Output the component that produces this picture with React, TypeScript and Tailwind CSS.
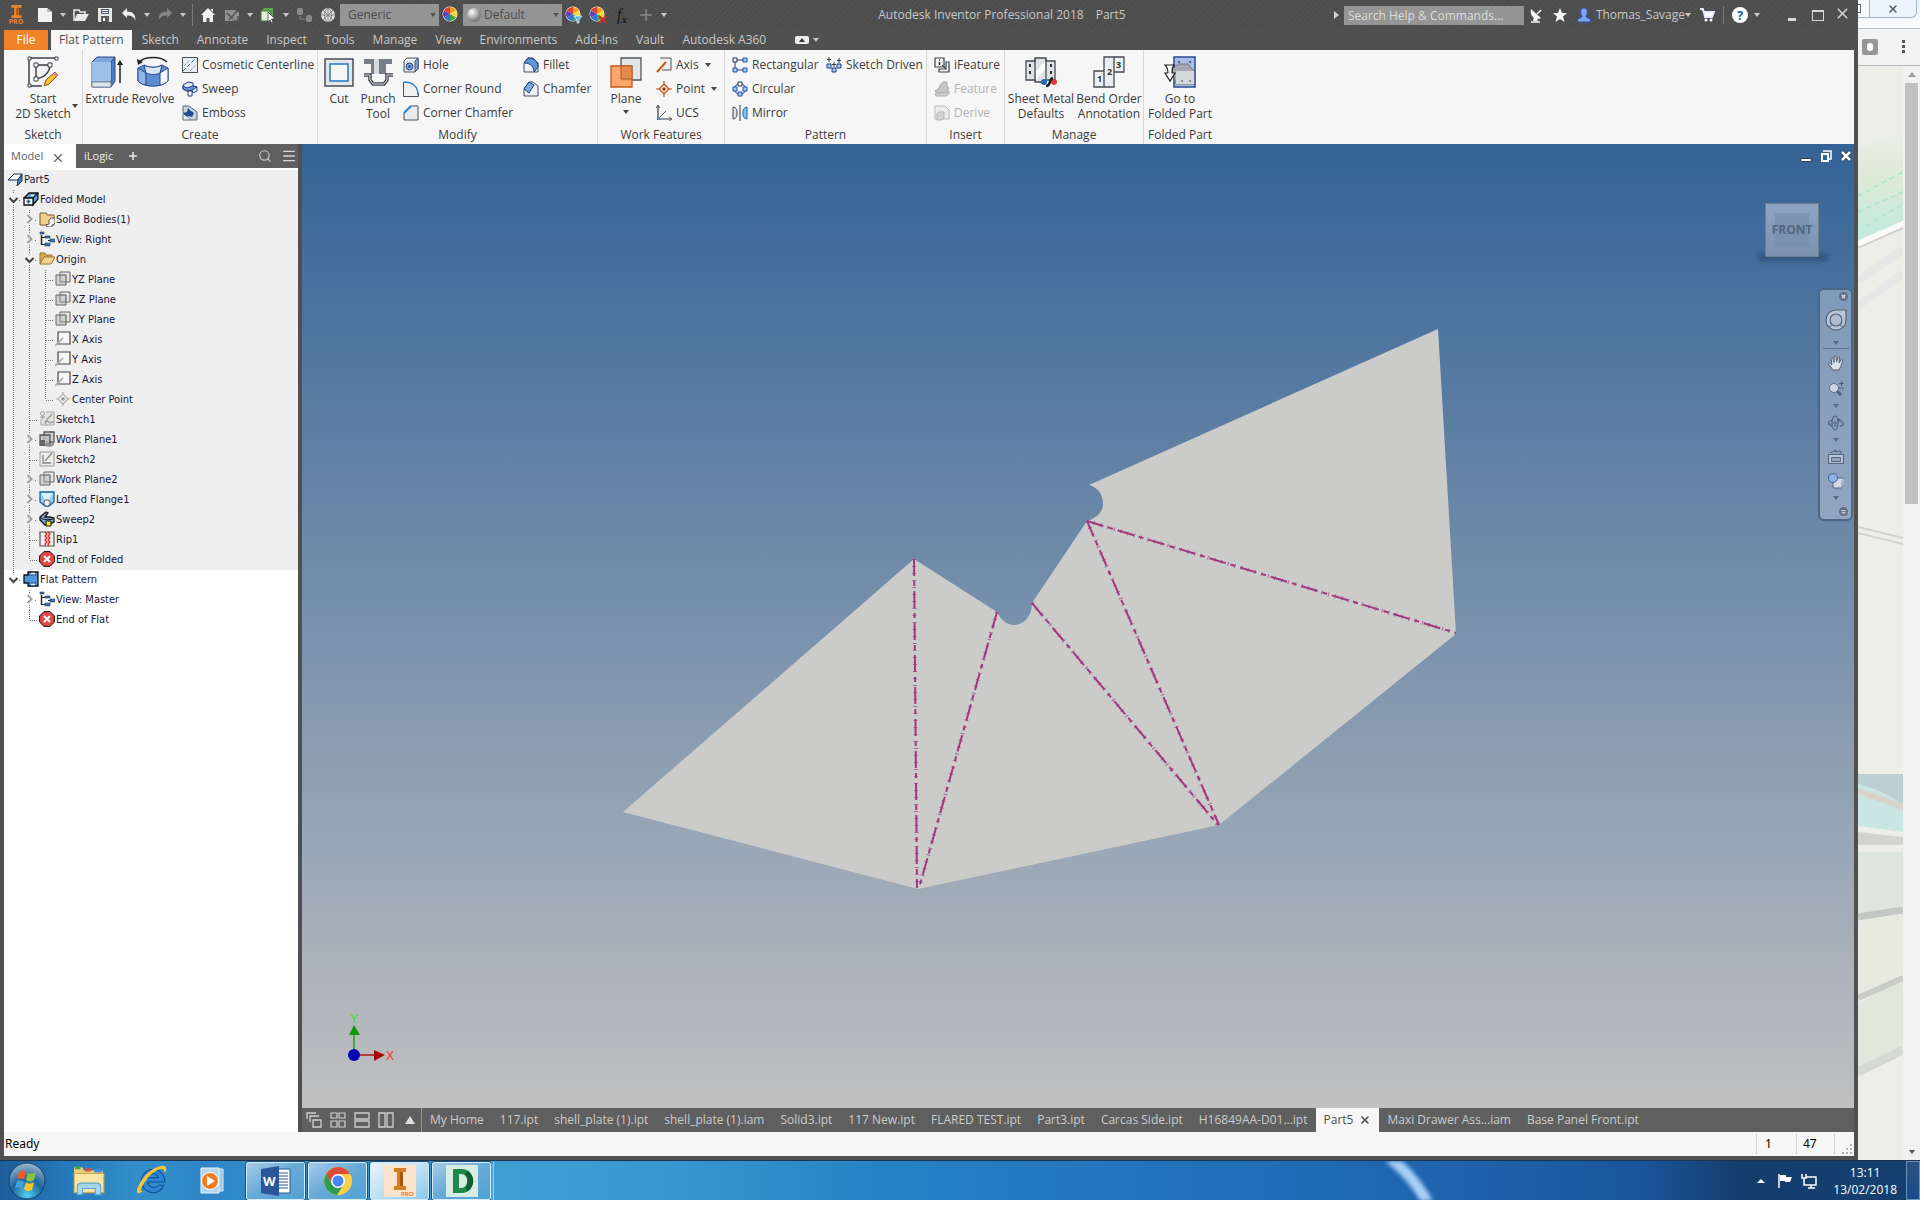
import type { ReactNode } from 'react';
import { Menu, Plus, Search, X } from 'lucide-react';

type IconProps = { children: ReactNode; size?: number; box?: number };

const Svg = ({ children, size = 16, box }: IconProps) => (
  <svg
    width={size}
    height={size}
    viewBox={`0 0 ${box ?? size} ${box ?? size}`}
    fill="none"
    className="shrink-0"
    aria-hidden="true"
  >
    {children}
  </svg>
);

const Caret = ({ className = 'text-[#c8c8c8]' }: { className?: string }) => (
  <svg width="6" height="4" viewBox="0 0 6 4" className={`shrink-0 ${className}`} aria-hidden="true">
    <path d="M0 0h6L3 4z" fill="currentColor" />
  </svg>
);

const ColorWheel = ({ badge }: { badge?: ReactNode }) => (
  <Svg size={18}>
    <circle cx="8" cy="8" r="7.500" fill="#fff" />
    <path d="M8 8V1a7 7 0 0 1 6 3.500z" fill="#f39a1f" />
    <path d="M8 8l6-3.500a7 7 0 0 1 0 7z" fill="#f7d93a" />
    <path d="M8 8l6 3.500A7 7 0 0 1 8 15z" fill="#43a83b" />
    <path d="M8 8v7a7 7 0 0 1-6-3.500z" fill="#2f74d0" />
    <path d="M8 8l-6 3.500a7 7 0 0 1 0-7z" fill="#5a3fb8" />
    <path d="M8 8L2 4.500A7 7 0 0 1 8 1z" fill="#e0402c" />
    {badge}
  </Svg>
);

const icons = {
  newFile: (
    <Svg>
      <path d="M1 1h9l5 4v10H1z" fill="#f2f2f2" />
      <path d="M10 1v4h5z" fill="#bdbdbd" />
    </Svg>
  ),
  open: (
    <Svg>
      <path d="M1 14V3h5l1 2h5v2" stroke="#e8e8e8" strokeWidth="1.500" />
      <path d="M1 14L4 7h12l-4 7z" fill="#e8e8e8" />
    </Svg>
  ),
  save: (
    <Svg>
      <path d="M1 1h14v14H2l-1-1z" fill="#e8e8e8" />
      <path d="M4 2h8v5H4z" fill="#4a5a70" />
      <path d="M5 3h6v1H5zM5 5h6v1H5z" fill="#fff" />
      <path d="M4 9h8v6H4z" fill="#5b5b5b" />
      <path d="M6 11h2v3H6z" fill="#fff" />
    </Svg>
  ),
  undo: (
    <Svg>
      <path d="M1 6l5-5v3.500c6 0 8.500 3 8.500 9-1.500-3.500-3.500-5-8.500-5V11z" fill="#efefef" />
    </Svg>
  ),
  redo: (
    <Svg>
      <path d="M15 6l-5-5v3.500c-6 0-8.500 3-8.500 9 1.500-3.500 3.500-5 8.500-5V11z" fill="#858585" />
    </Svg>
  ),
  home: (
    <Svg>
      <path d="M8 1l7 7h-2v7H9.500v-4h-3v4H3V8H1z" fill="#f2f2f2" />
      <path d="M11 2h2v3l-2-2z" fill="#f2f2f2" />
    </Svg>
  ),
  sketchTool: (
    <Svg>
      <path d="M1 3h10l4 3v8H1z" fill="#909090" />
      <path d="M5 13l8-9M3 6l6 6M9 14h5V9" stroke="#555" strokeWidth="1.500" />
    </Svg>
  ),
  select: (
    <Svg>
      <path d="M1 4l3-3h9v9l-2 3H1z" fill="#58a84a" />
      <path d="M1 4h9v10H1z" fill="#e4efe0" stroke="#3b7b30" />
      <path d="M8 5v10l2-2 1.500 3 1.500-1-1.500-3H15z" fill="#fff" stroke="#333" strokeWidth=".7" />
    </Svg>
  ),
  links: (
    <Svg>
      <rect x="1" y="1" width="6" height="7" rx="2" fill="#8a8a8a" />
      <rect x="10" y="8" width="6" height="7" rx="2" fill="#8a8a8a" />
      <path d="M4 9v3h5" stroke="#8a8a8a" />
    </Svg>
  ),
  material: (
    <Svg>
      <circle cx="8" cy="8" r="7" fill="#dedede" />
      <path d="M8 1v14M1 8h14M3 3l10 10M13 3L3 13" stroke="#777" strokeWidth=".8" />
      <ellipse cx="8" cy="8" rx="3.500" ry="7" stroke="#777" strokeWidth=".8" />
    </Svg>
  ),
  dish: (
    <Svg>
      <path d="M3 2l10 9c-4 3-12-1-10-9z" fill="#f5f5f5" />
      <path d="M9 7l4-4M3 15h9" stroke="#f5f5f5" strokeWidth="1.500" />
      <path d="M6 10l-1 4h5l-1-3z" fill="#f5f5f5" />
    </Svg>
  ),
  star: (
    <Svg>
      <path d="M8 1l2 5h5l-4 3.500 1.500 5.500L8 12l-4.500 3L5 9.500 1 6h5z" fill="#f5f5f5" />
    </Svg>
  ),
  user: (
    <Svg>
      <path
        d="M8 1c3 0 3.500 2 3.300 5-.1 2-1.300 3-1.300 4l4.500 2v3h-13v-3L6 10c0-1-1.200-2-1.300-4C4.500 3 5 1 8 1z"
        fill="#7da2f0"
        stroke="#2f4fa5"
      />
    </Svg>
  ),
  cart: (
    <Svg>
      <path d="M1 2h3l2 8h7l2-5H5" fill="#fff" stroke="#e8ecff" strokeWidth="1.800" />
      <circle cx="7" cy="13" r="1.500" fill="#fff" />
      <circle cx="12" cy="13" r="1.500" fill="#fff" />
    </Svg>
  ),
  startSketch: (
    <Svg size={32}>
      <path d="M2 31V2h29" stroke="#3c4048" strokeWidth="1.500" />
      <path d="M2 30h13" stroke="#3c4048" strokeWidth="1.500" />
      <path d="M9 9v14c8-1 14-7 14-14z" stroke="#3c4048" strokeWidth="1.500" fill="#f0f0f0" />
      <path d="M7 7h4v4H7zM21 7h4v4h-4zM7 21h4v4H7zM1 1h3v3H1zM28 1h3v3h-3zM1 28h3v3H1z" fill="#fff" stroke="#3c4048" />
      <path d="M17 30l2-6 9-8 3 3-9 9z" fill="#f7c42c" stroke="#8a4b18" />
      <path d="M26 18l2-2 3 3-2 2z" fill="#d88b8b" />
    </Svg>
  ),
  extrude: (
    <Svg size={32}>
      <path d="M1 6l5-5h18l-4 5v25H1z" fill="#7fa6da" stroke="#27498f" />
      <path d="M20 6l4-5v24l-4 6z" fill="#4f7cc4" stroke="#27498f" />
      <path d="M1 6h19v19H1z" fill="#9cc0ea" />
      <path d="M1 26h19v5H1z" fill="#dfe5ef" stroke="#7a8699" />
      <path d="M29 27V7" stroke="#222" strokeWidth="1.500" />
      <path d="M26 9l3-5 3 5z" fill="#222" />
    </Svg>
  ),
  revolve: (
    <Svg size={32}>
      <path d="M2 6C8 0 24 0 30 6" stroke="#222" strokeWidth="1.600" />
      <path d="M0 3l1 6 5-3z" fill="#222" />
      <path d="M1 12l6-3c5 3 13 3 18 0l6 3v13c-8 7-22 7-30 0z" fill="#5d8fd0" stroke="#27498f" />
      <path d="M7 9c5 3 13 3 18 0l-2 8c-4 2-10 2-14 0z" fill="#dbe4f2" stroke="#27498f" />
      <path d="M1 12l8 5v12c-3 0-6-2-8-4z" fill="#8fb5e6" stroke="#27498f" />
      <path d="M31 12l-8 5v12c3 0 6-2 8-4z" fill="#f3f6fb" stroke="#27498f" />
    </Svg>
  ),
  centerline: (
    <Svg>
      <path d="M.500.500h15v15H.500z" fill="#e9edf1" stroke="#48505c" />
      <path d="M1 14L14 1" stroke="#2c66b8" strokeDasharray="4 2" />
      <path d="M2 9l6-6M8 14l6-6" stroke="#9aa3ae" strokeDasharray="3 1" />
    </Svg>
  ),
  sweep: (
    <Svg>
      <path d="M1 4l5-3 5 1v3l4 1v4l-4 2-1-3-5 1-4-2z" fill="#dfe9f6" stroke="#1c3c80" />
      <path d="M1 5l4 2 6-2 4 1-5 3-5 1-4-2z" fill="#6f9ad6" stroke="#1c3c80" />
      <path d="M6 10h4v5H6z" fill="#fff" stroke="#1c3c80" />
    </Svg>
  ),
  emboss: (
    <Svg>
      <path d="M1 1h6l8 6v8H9L1 8z" fill="#c9d3df" stroke="#5a6675" />
      <path d="M1 8l4-1 1-4 3 3 3 2-2 4-4-1-2 1z" fill="#1e4f94" />
      <path d="M1 9v6h8" fill="#eef2f6" stroke="#5a6675" />
    </Svg>
  ),
  cut: (
    <Svg size={32}>
      <path d="M2 3h28v27H2z" fill="#e3e7ea" stroke="#4a4f57" strokeWidth="1.500" />
      <path d="M7 8h18v17H7z" fill="#f6f6f6" stroke="#2277c9" strokeWidth="1.500" />
    </Svg>
  ),
  punch: (
    <Svg size={32}>
      <path d="M2 3h28v5h-6v10H9V8H2z" fill="#777d86" />
      <path d="M12 3h5v15h-5z" fill="#d5d9dd" />
      <path d="M2 19h6v5l3 4h11l3-4v-5h6" stroke="#40454d" strokeWidth="3.500" />
      <path d="M2 19h6v5l3 4h11l3-4v-5h6" stroke="#dfe2e6" strokeWidth="1" />
    </Svg>
  ),
  hole: (
    <Svg>
      <path d="M1 4l3-3h11v11l-3 3H1z" fill="#e9eef4" stroke="#49515c" />
      <path d="M12 4l3-3v11l-3 3z" fill="#7da5dc" stroke="#49515c" />
      <circle cx="6.500" cy="9.500" r="3.500" fill="#87a9da" stroke="#1f3f85" />
      <circle cx="6.500" cy="9.500" r="1.300" fill="#1f3f85" />
    </Svg>
  ),
  cornerRound: (
    <Svg>
      <path d="M1 1c8 0 14 4 14 12v2H1z" fill="#eef0f2" />
      <path d="M.500 1v14.500h15V12" stroke="#49515c" />
      <path d="M1 1c9 0 14 5 14 13" stroke="#2a7ccd" strokeWidth="1.500" />
    </Svg>
  ),
  cornerChamfer: (
    <Svg>
      <path d="M1 8l7-7h7v14H1z" fill="#e9ecef" stroke="#49515c" />
      <path d="M1 8l7-7" stroke="#2a7ccd" strokeWidth="2" />
    </Svg>
  ),
  fillet: (
    <Svg>
      <path d="M1 6l4-5h5l5 5v9H1z" fill="#eef2f7" stroke="#49515c" />
      <path d="M1 6l4-5c6 0 10 3 10 9l-4 5c0-5-3-9-10-9z" fill="#5f93da" stroke="#1f3f85" />
    </Svg>
  ),
  chamfer: (
    <Svg>
      <path d="M1 8l5-7h4l5 4v10H1z" fill="#eef2f7" stroke="#49515c" />
      <path d="M1 8l5-7 5 3-5 8z" fill="#7fa8df" stroke="#1f3f85" />
    </Svg>
  ),
  plane: (
    <Svg size={32}>
      <path d="M11 2h20v22H11z" fill="#e2e5e8" stroke="#50555d" strokeWidth="1.300" />
      <path d="M1 10h21v21H1z" fill="#ff9e5e" fillOpacity=".9" stroke="#c65613" strokeWidth="1.300" />
      <path d="M11 10h11v13H11z" fill="#e58a4f" stroke="#a8602e" />
    </Svg>
  ),
  axis: (
    <Svg>
      <path d="M4 1h11v12H6" stroke="#50555d" fill="#eceef0" />
      <path d="M1 15L10 5" stroke="#c65613" strokeWidth="2" />
    </Svg>
  ),
  point: (
    <Svg>
      <path d="M8 3l5 5-5 5-5-5z" fill="#ffd9c0" stroke="#b9531a" strokeWidth="1.200" />
      <path d="M8 0v4M8 12v4M0 8h4M12 8h4" stroke="#b9531a" strokeWidth="1.200" />
      <circle cx="8" cy="8" r="1.600" fill="#7d3510" />
    </Svg>
  ),
  ucs: (
    <Svg>
      <path d="M2 1v13h13" stroke="#333a44" strokeWidth="1.200" />
      <path d="M0 3l2-3 2 3M13 12l3 2-3 2M2 14l8-8" stroke="#333a44" strokeWidth=".8" />
      <path d="M1 12h3v3H1z" fill="#4f8ad6" />
    </Svg>
  ),
  rectangular: (
    <Svg>
      <path d="M3 5v6M5 13h6M5 3h6" stroke="#333a44" />
      <path d="M1 1h4v4H1z" fill="#fff" stroke="#1c2c50" />
      <path d="M11 1h4v4h-4zM1 11h4v4H1zM11 11h4v4h-4z" fill="#a7ccf5" stroke="#1f4fc0" />
    </Svg>
  ),
  circular: (
    <Svg>
      <circle cx="8" cy="8" r="5.500" stroke="#1c3c80" />
      <path d="M6 1h4v4H6z" fill="#fff" stroke="#1c2c50" />
      <path d="M1 6h4v4H1zM11 6h4v4h-4zM6 11h4v4H6z" fill="#a7ccf5" stroke="#1f4fc0" />
    </Svg>
  ),
  mirror: (
    <Svg>
      <path d="M1 2c4 1 4 3 4 6s0 5-4 6z" fill="#dfe3e8" stroke="#3c434e" />
      <path d="M15 2c-4 1-4 3-4 6s0 5 4 6z" fill="#79c3f2" stroke="#1c66a8" />
      <path d="M8 0v16" stroke="#333" />
    </Svg>
  ),
  sketchDriven: (
    <Svg>
      <path d="M3 0v5M1 2.500h4M13 1v5M11 3.500h4M8 5v5M6 7.500h4" stroke="#333a44" />
      <path d="M1 7h4v4H1zM11 7h4v4h-4zM6 11h4v4H6z" fill="#a7ccf5" stroke="#1c3c80" />
    </Svg>
  ),
  ifeature: (
    <Svg>
      <path d="M1 1h9v9H1zM12 5h3v10H5v-3h7z" fill="#f4f4f4" stroke="#3a3f47" strokeWidth="1.200" />
      <path d="M5 3h1M5.500 5v3" stroke="#222" strokeWidth="1.500" />
      <path d="M8 8l4 4" stroke="#222" />
    </Svg>
  ),
  feature: (
    <Svg>
      <path d="M6 4l3-3h4v4l2 2-3 5H3l-2-2 4-3z" fill="#c4c4c4" stroke="#aaa" />
      <path d="M1 12h12l2-2v3l-3 2H2z" fill="#d0d0d0" stroke="#b0b0b0" />
    </Svg>
  ),
  derive: (
    <Svg>
      <path d="M1 1h10l4 4v9H1z" fill="#ececec" stroke="#bbb" />
      <path d="M3 9l2-2h5v6l-2 2H3z" fill="#d4d4d4" stroke="#b0b0b0" />
    </Svg>
  ),
  sheetMetal: (
    <Svg size={32}>
      <path d="M1 5h9V2h11v3h9v19H20v2H10v-2H1z" fill="#dfe3e7" stroke="#454a52" strokeWidth="1.300" />
      <path d="M10 3v22M21 3v20" stroke="#454a52" strokeWidth="1.300" />
      <path d="M11 16L20 5v8l-9 11z" fill="#fff" />
      <path d="M5 8v3M5 15v3M26 8v3M26 15v3" stroke="#333" strokeWidth="2" />
      <circle cx="19" cy="26" r="3" fill="#1f6fb8" />
      <circle cx="29" cy="26" r="3" fill="#dd3b3b" />
      <path d="M21 30c6 0 2-7 7-8" stroke="#222" strokeWidth="2.500" />
    </Svg>
  ),
  bendOrder: (
    <Svg size={32}>
      <path d="M1 15h10v16H1zM11 1h10v30H11zM21 1h10v15H21z" fill="#eceff2" stroke="#454a52" strokeWidth="1.300" />
      <text x="4" y="26" fontSize="9" fontFamily="Open Sans" fontWeight="700" fill="#333">1</text>
      <text x="14" y="19" fontSize="9" fontFamily="Open Sans" fontWeight="700" fill="#333">2</text>
      <text x="23" y="12" fontSize="9" fontFamily="Open Sans" fontWeight="700" fill="#333">3</text>
    </Svg>
  ),
  folded: (
    <Svg size={32}>
      <path d="M10 1h21v30H10z" fill="#a9bfe6" stroke="#27498f" strokeWidth="1.500" />
      <circle cx="15" cy="6" r="1.300" fill="#4f6ea8" />
      <circle cx="26" cy="6" r="1.300" fill="#4f6ea8" />
      <path d="M8 14l6-6h10l6 7v13H12z" fill="#a4a8ae" stroke="#777" />
      <path d="M12 15h18v13H12z" fill="#d6d9dc" />
      <circle cx="18" cy="25" r="1" fill="#777" />
      <circle cx="26" cy="25" r="1" fill="#777" />
      <path d="M1 9h10c-3 1-3 4-3 8h3l-5 8-5-8h3c0-3-1-6-3-8z" fill="#fff" stroke="#222" strokeWidth="1.200" />
    </Svg>
  ),
  part: (
    <Svg>
      <path d="M1 9l6-6h8l-4 6z" fill="#f4f6f8" stroke="#1e2f4c" />
      <path d="M11 9l4-6v7l-5 5z" fill="#4c86c2" stroke="#1e2f4c" />
    </Svg>
  ),
  foldedModel: (
    <Svg>
      <path d="M1 7l5-5h9v6l-5 6V7z" fill="#5fa2e0" stroke="#111" strokeWidth="1.300" />
      <path d="M1 7h9v7H1z" fill="#fff" stroke="#111" strokeWidth="1.300" />
      <path d="M10 7l5-5" stroke="#111" strokeWidth="1.300" />
      <path d="M5.500 8.500v4M3.500 10.500h4" stroke="#1f5f9f" strokeWidth="1.500" />
      <path d="M8 4.500h3" stroke="#fff" strokeWidth="1.500" />
    </Svg>
  ),
  bodies: (
    <Svg>
      <path d="M1 2h6l1 2h7v10H1z" fill="#f3d08a" stroke="#7a5f2a" />
      <path d="M10 9l2-2h4v5l-2 2h-1v2H8l-1-2 3-1z" fill="#f4f4f4" stroke="#555" />
    </Svg>
  ),
  view: (
    <Svg>
      <path d="M2.500 4v10" stroke="#222" strokeWidth="1.400" />
      <path d="M3 6.500h3M3 13.500h3M9 9.500h2" stroke="#222" />
      <path d="M1 1h4v2H1zM6 5h5v2H6zM11 8h5v3h-5zM6 12h5v3H6z" fill="#3f77b0" stroke="#173a66" strokeWidth=".6" />
    </Svg>
  ),
  folder: (
    <Svg>
      <path d="M1 13V2h5l1 2h6v3" fill="#dca95a" stroke="#9a7230" />
      <path d="M1 13L5 6h11l-4 7z" fill="#f6d596" stroke="#9a7230" />
    </Svg>
  ),
  workPlane: (
    <Svg>
      <path d="M5 1h10v10H5z" fill="#e4e4e4" stroke="#666" />
      <path d="M1 4h10v10H1z" fill="#c9c9c9" fillOpacity=".8" stroke="#666" />
      <path d="M5 4h6v7H5z" stroke="#888" />
    </Svg>
  ),
  workAxis: (
    <Svg>
      <path d="M3 1h12v12H3z" fill="#f6f6f6" stroke="#444" strokeWidth="1.200" />
      <path d="M0 15L8 7" stroke="#aaa" strokeWidth="1.700" />
    </Svg>
  ),
  centerPoint: (
    <Svg>
      <path d="M8 3l5 5-5 5-5-5zM8 1v3M8 12v3M1 8h3M12 8h3" stroke="#b0b0b0" strokeWidth="1.200" />
      <circle cx="8" cy="8" r="1.800" fill="#999" />
    </Svg>
  ),
  sketchShared: (
    <Svg>
      <path d="M7 1h8v13H2V8" fill="#e4e4e4" stroke="#a6a6a6" />
      <circle cx="3.500" cy="2.500" r="2" stroke="#999" />
      <path d="M3.500 5v3M1 6h5M6 11l7-8M6 13c1-3 3-3 4-2s3 1 5-1" stroke="#999" strokeWidth="1.200" />
    </Svg>
  ),
  workPlaneShared: (
    <Svg>
      <path d="M5 1h10v10H5z" fill="#d4d4d4" stroke="#555" strokeWidth="1.300" />
      <path d="M1 4h10v10H1z" fill="#bcbcbc" fillOpacity=".8" stroke="#555" strokeWidth="1.300" />
      <path d="M1 9h5v6H1z" fill="#666" />
      <path d="M6 15c1-4 3-4 5-3s4 0 4-2v4l-4 2z" fill="#8c8c8c" />
    </Svg>
  ),
  sketch: (
    <Svg>
      <path d="M1 1h14v14H1z" fill="#ececec" stroke="#999" />
      <path d="M4 4v8h8M6 10l7-8" stroke="#888" strokeWidth="1.300" />
    </Svg>
  ),
  loft: (
    <Svg>
      <path d="M1 1h14v10l-5 4H6l-5-4z" fill="#8fd0f5" stroke="#1c62a8" strokeWidth="1.300" />
      <path d="M2 2h12l-4 7H6z" fill="#d8f0fd" />
      <circle cx="8" cy="12" r="3.200" fill="#f4f4f4" stroke="#555" />
    </Svg>
  ),
  sweepPart: (
    <Svg>
      <path d="M1 6l6-5 2 1-3 4h5l4 1v4l-5 3H6l-5-5z" fill="#7aa6cf" stroke="#111" strokeWidth="1.300" />
      <path d="M2 7c3 2 6 2 12 1" stroke="#111" />
      <path d="M7 10h5v5H7z" fill="#f7ea2c" stroke="#111" />
    </Svg>
  ),
  rip: (
    <Svg>
      <path d="M1 1h14v14H1z" fill="#ededed" stroke="#555" strokeWidth="1.200" />
      <path d="M6 1l2 2-2 2 2 2-2 2 2 2-2 2 1 2M9 1l2 2-2 2 2 2-2 2 2 2-2 2 1 2" stroke="#d02020" strokeWidth="1.200" />
    </Svg>
  ),
  endOf: (
    <Svg>
      <path d="M5 .600h6L15.400 5v6L11 15.400H5L.600 11V5z" fill="#e04848" stroke="#111" />
      <path d="M5 5l6 6M11 5l-6 6" stroke="#fff" strokeWidth="2" />
    </Svg>
  ),
  flatPattern: (
    <Svg>
      <path d="M5 1h10v14H5v-3H1V4h4z" fill="#4f96d8" stroke="#111" strokeWidth="1.300" />
      <path d="M5 4h10M5 12h10" stroke="#1d3f66" strokeDasharray="2 1" />
      <path d="M8 2.500h4M8 13.500h4" stroke="#e8f4ff" strokeWidth="1.300" />
    </Svg>
  ),
};

type IconName = keyof typeof icons;

const QatButton = ({ label, children }: { label: string; children: ReactNode }) => (
  <button aria-label={label} className="flex h-6 w-6 shrink-0 items-center justify-center">
    {children}
  </button>
);

const QatCaret = ({ label }: { label: string }) => (
  <button aria-label={label} className="flex h-6 w-3 shrink-0 items-center justify-center">
    <Caret />
  </button>
);

const Combo = ({ label, value, sphere }: { label: string; value: string; sphere?: boolean }) => (
  <div className="relative h-[22px] w-[99px] shrink-0">
    <select
      aria-label={label}
      className={`h-full w-full appearance-none bg-[#959595] text-[12px] text-[#4a4a4a] ${sphere ? 'pl-[21px]' : 'pl-2'}`}
    >
      <option>{value}</option>
    </select>
    {sphere && (
      <span className="pointer-events-none absolute left-1 top-1 h-[14px] w-[14px] rounded-full bg-[radial-gradient(circle_at_35%_30%,#ffffff,#8a8a8a_60%,#555555)]" />
    )}
    <span className="pointer-events-none absolute right-[3px] top-[9px]">
      <Caret className="text-[#555555]" />
    </span>
  </div>
);

const TitleBar = () => (
  <header className="flex h-[30px] items-center bg-[repeating-linear-gradient(135deg,#505050_0px,#505050_3px,#4b4b4b_3px,#4b4b4b_4px)] pl-1 text-[12px] text-[#c8c8c8]">
    <div className="flex shrink-0 items-center">
      <button aria-label="Application menu" className="mr-[5px] flex w-6 flex-col items-center leading-none">
        <svg width="11" height="13" viewBox="0 0 11 14" aria-hidden="true">
          <path d="M0 0h11v3H8v8h3v3H0v-3h3V3H0z" fill="#e8862e" />
          <path d="M5 3h3v8H5z" fill="#b65f14" />
        </svg>
        <span className="text-[7px] font-bold leading-[8px] text-[#e8862e]">PRO</span>
      </button>
      <QatButton label="New">{icons.newFile}</QatButton>
      <QatCaret label="New options" />
      <QatButton label="Open">{icons.open}</QatButton>
      <QatButton label="Save">{icons.save}</QatButton>
      <QatButton label="Undo">{icons.undo}</QatButton>
      <QatCaret label="Undo options" />
      <QatButton label="Redo">{icons.redo}</QatButton>
      <QatCaret label="Redo options" />
      <span className="mx-[3px] h-[22px] w-px bg-[#7a7a7a]" />
      <QatButton label="Home">{icons.home}</QatButton>
      <QatButton label="Sketch">{icons.sketchTool}</QatButton>
      <QatCaret label="Sketch options" />
      <QatButton label="Select">{icons.select}</QatButton>
      <QatCaret label="Select options" />
      <QatButton label="Relationships">{icons.links}</QatButton>
      <QatButton label="Material browser">{icons.material}</QatButton>
      <Combo label="Material" value="Generic" />
      <QatButton label="Appearance browser">
        <ColorWheel />
      </QatButton>
      <Combo label="Appearance" value="Default" sphere />
      <QatButton label="Adjust appearance">
        <ColorWheel badge={<path d="M9 10h8l-3 4v3h-2v-3z" fill="#52b7ee" stroke="#fff" strokeWidth=".7" />} />
      </QatButton>
      <QatButton label="Clear appearance">
        <ColorWheel badge={<path d="M10 10l7 7M17 10l-7 7" stroke="#e02a1c" strokeWidth="2" />} />
      </QatButton>
      <QatButton label="Parameters">
        <span className="font-['Liberation_Serif',serif] text-[16px] italic leading-none text-[#151515]">
          f<sub className="text-[11px] font-bold">x</sub>
        </span>
      </QatButton>
      <QatButton label="Add">
        <Plus size={18} className="text-[#888888]" />
      </QatButton>
      <QatCaret label="Customize" />
    </div>
    <h1 className="flex flex-1 justify-center gap-3 whitespace-nowrap pb-px">
      <span>Autodesk Inventor Professional 2018</span>
      <span>Part5</span>
    </h1>
    <div className="flex shrink-0 items-center">
      <svg width="5" height="8" viewBox="0 0 5 8" className="mr-[5px]" aria-hidden="true">
        <path d="M0 0l5 4-5 4z" fill="#d0d0d0" />
      </svg>
      <input
        aria-label="Search help"
        placeholder="Search Help & Commands..."
        className="h-[19px] w-[180px] bg-[#959595] px-1 text-[12px] text-white outline-none placeholder:text-[#dcdcdc]"
      />
      <button aria-label="Communication center" className="flex w-6 justify-center">
        {icons.dish}
      </button>
      <button aria-label="Favorites" className="flex w-6 justify-center">
        {icons.star}
      </button>
      <button className="ml-1 flex items-center gap-1 pr-2">
        {icons.user}
        <span className="flex items-center">
          Thomas_Savage
          <Caret />
        </span>
      </button>
      <button aria-label="App store">{icons.cart}</button>
      <span className="mx-2 h-[18px] w-px bg-[#7a7a7a]" />
      <button
        aria-label="Help"
        className="flex h-4 w-4 items-center justify-center rounded-full bg-white text-[13px] font-bold leading-none text-[#2456b8]"
      >
        ?
      </button>
      <button aria-label="Help options" className="mx-[6px]">
        <Caret />
      </button>
      <button aria-label="Minimize" className="ml-4 flex w-5 justify-center pt-2">
        <span className="h-[3px] w-2 bg-[#d8d8d8]" />
      </button>
      <button aria-label="Maximize" className="ml-1 flex w-6 justify-center">
        <span className="h-[11px] w-3 border border-t-2 border-[#d8d8d8]" />
      </button>
      <button aria-label="Close" className="mr-1 flex w-6 justify-center pb-1">
        <X size={17} className="text-[#d8d8d8]" />
      </button>
    </div>
  </header>
);

const ribbonTabs = [
  'Sketch',
  'Annotate',
  'Inspect',
  'Tools',
  'Manage',
  'View',
  'Environments',
  'Add-Ins',
  'Vault',
  'Autodesk A360',
];

const RibbonTabs = () => (
  <nav className="flex h-5 bg-[#505050] pl-1 text-[12px] leading-5 text-[#c8c8c8]">
    <button className="mr-[3px] w-11 bg-[#f08228] text-white">File</button>
    <button className="mr-px whitespace-nowrap bg-[#f6f6f6] px-2 text-[#505050]">Flat Pattern</button>
    {ribbonTabs.map((tab) => (
      <button key={tab} className="whitespace-nowrap px-[9px]">
        {tab}
      </button>
    ))}
    <button aria-label="Ribbon display" className="ml-5 flex items-center gap-1">
      <span className="flex h-2 w-[14px] items-center justify-center rounded-xs bg-[#ececec]">
        <svg width="6" height="4" viewBox="0 0 6 4" aria-hidden="true">
          <path d="M0 4l3-4 3 4z" fill="#333" />
        </svg>
      </span>
      <Caret />
    </button>
  </nav>
);

const Panel = ({ title, className, children }: { title: string; className: string; children: ReactNode }) => (
  <section className={`flex shrink-0 flex-col border-r border-[#d8d8d8] ${className}`}>
    <div className="flex h-[76px] pt-[3px]">{children}</div>
    <h2 className="text-center leading-[18px]">{title}</h2>
  </section>
);

type BigProps = { icon: IconName; lines: string[]; className: string; caret?: 'side' | 'below' };

const BigButton = ({ icon, lines, className, caret }: BigProps) => (
  <button className={`relative flex flex-col items-center leading-[15px] ${className}`}>
    <span className="mb-[3px] pt-[3px]">{icons[icon]}</span>
    {lines.map((line) => (
      <span key={line} className="whitespace-nowrap">
        {line}
      </span>
    ))}
    {caret === 'below' && <Caret className="mt-1 text-[#444444]" />}
    {caret === 'side' && (
      <span className="absolute bottom-[18px] right-1">
        <Caret className="text-[#444444]" />
      </span>
    )}
  </button>
);

type SmallItem = { icon: IconName; label: string; caret?: boolean; disabled?: boolean };

const SmallColumn = ({ items, className }: { items: SmallItem[]; className: string }) => (
  <div className={`flex shrink-0 flex-col ${className}`}>
    {items.map(({ icon, label, caret, disabled }) => (
      <button
        key={label}
        disabled={disabled}
        className="flex h-6 items-center gap-1 whitespace-nowrap disabled:text-[#b4b4b4]"
      >
        {icons[icon]}
        {label}
        {caret && <Caret className="ml-[2px] text-[#444444]" />}
      </button>
    ))}
  </div>
);

const Ribbon = () => (
  <div className="flex h-[94px] shrink-0 bg-[#f6f6f6] text-[12px] text-[#3c3c3c]">
    <Panel title="Sketch" className="w-[79px]">
      <BigButton icon="startSketch" lines={['Start', '2D Sketch']} className="w-[78px]" caret="side" />
    </Panel>
    <Panel title="Create" className="w-[235px]">
      <BigButton icon="extrude" lines={['Extrude']} className="w-12" />
      <BigButton icon="revolve" lines={['Revolve']} className="w-11" />
      <SmallColumn
        className="pl-[7px]"
        items={[
          { icon: 'centerline', label: 'Cosmetic Centerline' },
          { icon: 'sweep', label: 'Sweep' },
          { icon: 'emboss', label: 'Emboss' },
        ]}
      />
    </Panel>
    <Panel title="Modify" className="w-[280px]">
      <BigButton icon="cut" lines={['Cut']} className="w-[42px]" />
      <BigButton icon="punch" lines={['Punch', 'Tool']} className="w-9" />
      <SmallColumn
        className="w-[127px] pl-[7px]"
        items={[
          { icon: 'hole', label: 'Hole' },
          { icon: 'cornerRound', label: 'Corner Round' },
          { icon: 'cornerChamfer', label: 'Corner Chamfer' },
        ]}
      />
      <SmallColumn
        className=""
        items={[
          { icon: 'fillet', label: 'Fillet' },
          { icon: 'chamfer', label: 'Chamfer' },
        ]}
      />
    </Panel>
    <Panel title="Work Features" className="w-[127px]">
      <BigButton icon="plane" lines={['Plane']} className="w-14" caret="below" />
      <SmallColumn
        className="pl-[2px]"
        items={[
          { icon: 'axis', label: 'Axis', caret: true },
          { icon: 'point', label: 'Point', caret: true },
          { icon: 'ucs', label: 'UCS' },
        ]}
      />
    </Panel>
    <Panel title="Pattern" className="w-[202px]">
      <SmallColumn
        className="w-[101px] pl-[7px]"
        items={[
          { icon: 'rectangular', label: 'Rectangular' },
          { icon: 'circular', label: 'Circular' },
          { icon: 'mirror', label: 'Mirror' },
        ]}
      />
      <SmallColumn className="" items={[{ icon: 'sketchDriven', label: 'Sketch Driven' }]} />
    </Panel>
    <Panel title="Insert" className="w-[78px]">
      <SmallColumn
        className="pl-[7px]"
        items={[
          { icon: 'ifeature', label: 'iFeature' },
          { icon: 'feature', label: 'Feature', disabled: true },
          { icon: 'derive', label: 'Derive', disabled: true },
        ]}
      />
    </Panel>
    <Panel title="Manage" className="w-[139px]">
      <BigButton icon="sheetMetal" lines={['Sheet Metal', 'Defaults']} className="w-[72px]" />
      <BigButton icon="bendOrder" lines={['Bend Order', 'Annotation']} className="w-[64px]" />
    </Panel>
    <section className="flex w-[72px] shrink-0 flex-col">
      <div className="flex h-[76px] pt-[3px]">
        <BigButton icon="folded" lines={['Go to', 'Folded Part']} className="w-full" />
      </div>
      <h2 className="text-center leading-[18px]">Folded Part</h2>
    </section>
  </div>
);

// One letter per indent column: v line, t branch, e last branch,
// o open node, l open node that closes its line, c closed node, _ empty
const Guide = ({ kind }: { kind: string }) => (
  <svg width="16" height="20" viewBox="0 0 16 20" fill="none" className="shrink-0" aria-hidden="true">
    {kind === 'v' || kind === 't' ? <path d="M8.500 0v20" stroke="#777" strokeDasharray="1 1" /> : null}
    {kind === 'e' ? <path d="M8.500 0v10" stroke="#777" strokeDasharray="1 1" /> : null}
    {kind === 't' || kind === 'e' ? <path d="M9 10.500h7" stroke="#777" strokeDasharray="1 1" /> : null}
    {'olc'.includes(kind) ? <path d="M8.500 0v4M14 10.500h2" stroke="#777" strokeDasharray="1 1" /> : null}
    {'oc'.includes(kind) ? <path d="M8.500 15v5" stroke="#777" strokeDasharray="1 1" /> : null}
    {'ol'.includes(kind) ? <path d="M4.500 8L8.500 12 12.500 8" stroke="#404040" strokeWidth="2" /> : null}
    {kind === 'c' ? <path d="M6.500 5L10.500 9 6.500 13" stroke="#a0a0a0" strokeWidth="2" /> : null}
  </svg>
);

type Row = [guides: string, icon: IconName, label: string];

const foldedRows: Row[] = [
  ['', 'part', 'Part5'],
  ['o', 'foldedModel', 'Folded Model'],
  ['vc', 'bodies', 'Solid Bodies(1)'],
  ['vc', 'view', 'View: Right'],
  ['vo', 'folder', 'Origin'],
  ['vvt', 'workPlane', 'YZ Plane'],
  ['vvt', 'workPlane', 'XZ Plane'],
  ['vvt', 'workPlane', 'XY Plane'],
  ['vvt', 'workAxis', 'X Axis'],
  ['vvt', 'workAxis', 'Y Axis'],
  ['vvt', 'workAxis', 'Z Axis'],
  ['vve', 'centerPoint', 'Center Point'],
  ['vt', 'sketchShared', 'Sketch1'],
  ['vc', 'workPlaneShared', 'Work Plane1'],
  ['vt', 'sketch', 'Sketch2'],
  ['vc', 'workPlane', 'Work Plane2'],
  ['vc', 'loft', 'Lofted Flange1'],
  ['vc', 'sweepPart', 'Sweep2'],
  ['vt', 'rip', 'Rip1'],
  ['ve', 'endOf', 'End of Folded'],
];

const flatRows: Row[] = [
  ['l', 'flatPattern', 'Flat Pattern'],
  ['_c', 'view', 'View: Master'],
  ['_e', 'endOf', 'End of Flat'],
];

const Tree = ({ rows, className }: { rows: Row[]; className: string }) => (
  <ul className={className}>
    {rows.map(([guides, icon, label]) => (
      <li key={label} className="flex h-5 items-center pl-px">
        {guides.split('').map((kind, i) => (
          <Guide key={i} kind={kind} />
        ))}
        <span className="ml-[2px] mr-px pb-[2px]">{icons[icon]}</span>
        {label}
      </li>
    ))}
  </ul>
);

const Browser = () => (
  <aside className="flex w-[298px] shrink-0 flex-col border-r-4 border-[#505050] bg-white">
    <div className="flex h-6 items-center bg-[#5f5f5f] text-[11px] text-[#ededed]">
      <button className="flex h-full w-[72px] items-center justify-between bg-white pl-[7px] pr-[11px] text-[#606060]">
        Model
        <X size={14} className="mt-1" />
      </button>
      <button className="ml-2">iLogic</button>
      <button aria-label="Add panel" className="ml-[14px]">
        <Plus size={12} strokeWidth={3} />
      </button>
      <button aria-label="Search model" className="ml-auto mr-[9px]">
        <Search size={14} className="text-[#c8c8c8]" />
      </button>
      <button aria-label="Panel menu" className="mr-px">
        <Menu size={16} className="text-[#d8d8d8]" />
      </button>
    </div>
    <div className="pt-[2px] font-['DejaVu_Sans_Condensed','Noto_Sans',sans-serif] text-[11px] text-[#16163a]">
      <Tree rows={foldedRows} className="bg-[#efefef]" />
      <Tree rows={flatRows} className="" />
    </div>
  </aside>
);

const NavCaret = () => (
  <button aria-label="More options" className="flex h-[10px] items-center">
    <Caret className="text-[#5a6b80]" />
  </button>
);

const NavBar = () => (
  <div className="absolute right-px top-36 flex w-[35px] flex-col items-center rounded-md border-2 border-[#4a6788] bg-[#b8c4d6]/50">
    <button aria-label="Close navigation bar" className="flex h-3 items-center self-end pr-[3px]">
      <Svg size={9} box={10}>
        <circle cx="5" cy="5" r="5" fill="#5d6d82" />
        <path d="M3 3l4 4M7 3L3 7" stroke="#cfd8e4" strokeWidth="1.500" />
      </Svg>
    </button>
    <button aria-label="Steering wheel" className="flex h-9 items-center">
      <Svg size={22}>
        <path d="M11 1h10v10a10 10 0 1 1-10-10z" fill="#b9c6d8" stroke="#52647c" strokeWidth="1.200" />
        <circle cx="11" cy="11" r="6" fill="#aebdd2" stroke="#52647c" strokeWidth="1.200" />
        <path d="M7 16l-3 2M15 16l3 2" stroke="#52647c" />
      </Svg>
    </button>
    <NavCaret />
    <span className="h-px w-[26px] bg-[#5a7290]" />
    <button aria-label="Pan" className="flex h-7 items-center">
      <Svg size={16}>
        <path
          d="M5 15L1 9.500c-1-1.500 1-2 2-.5l1 1L3 3.500c0-1.500 1.500-1.500 2 0l1 4V2c0-1.500 2-1.500 2 0l.5 5L10 2.500c.5-1.500 2-1 1.700.5L11 8l2-3c1-1 2-.5 1.500 1L13 11l-2 4z"
          fill="#dde2e8"
          stroke="#4f5f74"
        />
      </Svg>
    </button>
    <button aria-label="Zoom" className="flex h-6 items-center">
      <Svg size={16}>
        <path d="M9 10l4 4" stroke="#4f5f74" strokeWidth="3" />
        <circle cx="6" cy="7" r="4.500" fill="#c8d6e6" stroke="#5d6f86" />
        <path d="M13.500 0v5M11 2.500h5M11 7h5" stroke="#4f5f74" />
      </Svg>
    </button>
    <NavCaret />
    <button aria-label="Orbit" className="flex h-6 items-center">
      <Svg size={16}>
        <ellipse cx="7" cy="8" rx="3" ry="7" stroke="#52647c" strokeWidth="1.200" />
        <path d="M4 5C1 6 0 8 1 9s2 2 3 2M6 11h3M12 11c2 0 4-1 3-3s-2-2-5-3" stroke="#52647c" strokeWidth="1.200" />
        <path d="M7 6v4M5 8h4M11 3v4M9 5h4" stroke="#52647c" />
      </Svg>
    </button>
    <NavCaret />
    <button aria-label="Look at" className="flex h-6 items-center">
      <Svg size={16}>
        <path d="M.500 5.500h15v9H.500z" fill="#b9c6d8" stroke="#52647c" strokeWidth="1.200" />
        <path d="M3.500 8.500h9v4h-9z" fill="#8fa3bd" stroke="#52647c" />
        <path d="M2 4l6-3-1 2 6-1v3" stroke="#52647c" />
      </Svg>
    </button>
    <button aria-label="View face" className="flex h-6 items-center">
      <Svg size={16}>
        <path d="M5 8l3-3h8v7l-3 3H5z" fill="#d5dae2" stroke="#52647c" />
        <path d="M13 8l3-3v7l-3 3z" fill="#a7b1c0" />
        <circle cx="5" cy="5" r="4.500" fill="#8fb0e4" stroke="#3f64a4" />
      </Svg>
    </button>
    <NavCaret />
    <button aria-label="Navigation bar options" className="flex h-4 items-center self-end pr-[3px]">
      <Svg size={9} box={10}>
        <circle cx="5" cy="5" r="5" fill="#5d6d82" />
        <path d="M2 4h6M3 6l2 2 2-2z" stroke="#cfd8e4" />
      </Svg>
    </button>
  </div>
);

const bendLines = ['M914 559L917 888', 'M997 612L919 888', 'M1032 603L1218 825', 'M1087 521L1219 825', 'M1087 521L1456 633'];

const Viewport = () => (
  <div className="relative min-h-0 flex-1 overflow-hidden bg-linear-to-b from-[#336396] to-[#c0c0c0]">
    <svg viewBox="302 144 1552 964" className="block h-full w-full" role="img" aria-label="Flat pattern">
      <path
        d="M914 559L997 612C1001 620 1007 625 1014 625C1023 625 1032 617 1032 603L1087 521C1096 518 1103 513 1103 503C1103 494 1097 487 1089 485L1438 329L1456 634L1219 825L918 889L623 812z"
        fill="#cbcbc9"
      />
      {bendLines.map((d) => (
        <g key={d} stroke="#a0387e" fill="none">
          <path d={d} strokeWidth="2" strokeDasharray="17 5 5 5" />
          <path d={d} strokeWidth="4" strokeDasharray="1 6" strokeOpacity=".7" />
        </g>
      ))}
      <path d="M354 1034v16" stroke="#1ca51c" strokeWidth="1.500" />
      <path d="M349 1035l5-10 6 10z" fill="#0b9a0b" />
      <path d="M360 1055h15" stroke="#b01010" strokeWidth="1.500" />
      <path d="M374 1050l11 5-11 6z" fill="#a80808" />
      <circle cx="354" cy="1055" r="6" fill="#0505b0" />
      <text x="350" y="1023" fontSize="12" fontFamily="Liberation Sans" fill="#2ee52e">Y</text>
      <text x="386" y="1060" fontSize="12" fontFamily="Liberation Sans" fill="#f03030">X</text>
    </svg>
    <div className="absolute right-[2px] top-[6px] flex items-center gap-2 text-white">
      <button aria-label="Minimize view" className="flex h-3 items-end">
        <span className="h-1 w-3 rounded-xs border border-[#333c48] bg-white" />
      </button>
      <button aria-label="Restore view">
        <Svg size={12}>
          <path d="M3 1h8v8H9" stroke="#fff" strokeWidth="1.500" />
          <path d="M2 4h6v7H2z" fill="#336396" stroke="#fff" strokeWidth="2" />
        </Svg>
      </button>
      <button aria-label="Close view">
        <Svg size={12}>
          <path d="M2 2l8 8M10 2l-8 8" stroke="#26384f" strokeWidth="4" />
          <path d="M2 2l8 8M10 2l-8 8" stroke="#fff" strokeWidth="2.500" />
        </Svg>
      </button>
    </div>
    <div className="absolute right-[35px] top-[59px]">
      <span className="absolute -bottom-1 -left-2 h-2 w-[72px] rounded-full bg-[#26466c]/60 blur-[2px]" />
      <button className="relative flex h-[54px] w-[54px] items-center justify-center border border-[#6f7f92] bg-linear-to-b from-[#8ea4c2] to-[#7b91ad]">
        <span className="flex h-[34px] w-[34px] items-center justify-center bg-[#768dab]/60 text-[12px] font-bold text-[#54677f]">
          FRONT
        </span>
      </button>
    </div>
    <NavBar />
  </div>
);

const docTabs = [
  'My Home',
  '117.ipt',
  'shell_plate (1).ipt',
  'shell_plate (1).iam',
  'Solid3.ipt',
  '117 New.ipt',
  'FLARED TEST.ipt',
  'Part3.ipt',
  'Carcas Side.ipt',
  'H16849AA-D01...ipt',
];

const DocTabs = () => (
  <div className="flex h-6 items-center overflow-hidden whitespace-nowrap bg-[#5f5f5f] text-[12px] text-[#cccccc]">
    <div className="flex items-center gap-2 pl-1 text-[#d0d0d0]">
      <button aria-label="Cascade">
        <Svg>
          <path d="M1 7V1h9M4 10V4h9" stroke="currentColor" strokeWidth="1.300" />
          <path d="M7 8h8v7H7z" stroke="currentColor" strokeWidth="1.300" />
        </Svg>
      </button>
      <button aria-label="Arrange">
        <Svg>
          <path d="M1 1h6v5H1zM9 1h6v5H9zM1 9h6v6H1zM9 9h6v6H9z" stroke="currentColor" strokeWidth="1.200" />
        </Svg>
      </button>
      <button aria-label="Tile horizontally">
        <Svg>
          <path d="M1 1h14v6H1zM1 9h14v6H1z" stroke="currentColor" strokeWidth="1.300" />
        </Svg>
      </button>
      <button aria-label="Tile vertically">
        <Svg>
          <path d="M1 1h6v14H1zM9 1h6v14H9z" stroke="currentColor" strokeWidth="1.300" />
        </Svg>
      </button>
      <button aria-label="Show tabs" className="mx-[3px]">
        <Svg size={10}>
          <path d="M0 9L5 1l5 8z" fill="#dedede" />
        </Svg>
      </button>
    </div>
    <div className="ml-[3px] flex h-full items-center border-l border-[#999999]">
      {docTabs.map((tab) => (
        <button key={tab} className="px-2">
          {tab}
        </button>
      ))}
      <button className="flex h-full items-center gap-[6px] bg-[#f6f6f6] px-2 text-[#4c4c4c]">
        Part5
        <X size={12} strokeWidth={3} />
      </button>
      <button className="px-2">Maxi Drawer Ass...iam</button>
      <button className="px-2">Base Panel Front.ipt</button>
    </div>
  </div>
);

const StatusBar = () => (
  <footer className="flex h-6 shrink-0 items-center bg-[#f6f6f6] font-['Noto_Sans',sans-serif] text-[12px] leading-5 text-black">
    <span className="flex-1 pl-px">Ready</span>
    <span className="h-5 w-10 border-l border-[#d0d0d0] pl-2">1</span>
    <span className="h-5 w-[38px] border-l border-[#d0d0d0] pl-[6px]">47</span>
    <span className="flex h-5 w-5 items-end justify-end border-l border-[#d0d0d0] pr-[2px]">
      <Svg size={10}>
        <path d="M8 1h2M8 5h2M4 5h2M8 9h2M4 9h2M0 9h2" stroke="#b0b0b0" strokeWidth="2" />
      </Svg>
    </span>
  </footer>
);

const BackWindow = () => (
  <div className="flex w-[62px] shrink-0 flex-col bg-[#f1f1f1]">
    <div className="flex h-[29px] items-start border-b border-[#b8bcc2] bg-linear-to-b from-[#e4f0fa] to-[#fafdff] pr-[3px]">
      <button
        aria-label="Restore browser"
        className="h-[18px] w-3 border-b border-r border-[#9fb4c8] bg-[#f4f9fd]"
      >
        <span className="block h-[9px] w-[3px] border border-l-0 border-[#606a76]" />
      </button>
      <button
        aria-label="Close browser"
        className="flex h-[18px] flex-1 items-center justify-center rounded-br-md border-b border-r border-[#9fb4c8] bg-[#edf5fc] text-[#505a66]"
      >
        <X size={12} strokeWidth={3} />
      </button>
    </div>
    <div className="flex h-[37px] items-center justify-between border-b border-[#b8b8b8] bg-[#f2f2f2] pl-1 pr-[14px]">
      <button aria-label="Extension" className="flex h-4 w-4 items-center justify-center rounded-xs bg-[#969696]">
        <span className="h-2 w-[6px] rounded-full bg-white" />
      </button>
      <button aria-label="Browser menu">
        <svg width="4" height="14" viewBox="0 0 4 14" fill="#555" aria-hidden="true">
          <path d="M0 0h3v3H0zM0 5h3v3H0zM0 10h3v3H0z" />
        </svg>
      </button>
    </div>
    <div className="flex min-h-0 flex-1">
      <svg viewBox="0 0 45 1094" preserveAspectRatio="none" className="block h-full w-[45px]" aria-hidden="true">
        <defs>
          <linearGradient id="leaf" x1="0" y1="0" x2="0" y2="1">
            <stop offset="0" stopColor="#eeefe8" />
            <stop offset=".5" stopColor="#dbead6" />
            <stop offset="1" stopColor="#c0e9de" />
          </linearGradient>
        </defs>
        <path d="M0 0h45v1094H0z" fill="#eeeee8" />
        <path d="M0 85L45 60V155L0 174z" fill="url(#leaf)" />
        <path d="M0 130l45-24M0 146l45-20M8 160l37-22" stroke="#b4e6cf" strokeWidth="2" strokeDasharray="5 4" />
        <path d="M0 175L45 155v8L0 184z" fill="#fafafa" />
        <path d="M0 182L45 162" stroke="#cfcfcb" strokeWidth="2" />
        <path d="M0 214L45 184M0 240L45 208" stroke="#e6e8e8" strokeWidth="8" />
        <path d="M0 461L45 472M0 467L45 478" stroke="#d2d2ce" strokeWidth="2" />
        <path d="M0 708h45v35L0 722z" fill="#bcd0d3" />
        <path d="M0 718c20 5 35 12 45 22v26L0 760z" fill="#c9e6e2" />
        <path d="M0 722l45 16v6L0 728z" fill="#d9d3cc" />
        <path d="M0 766l45 5v8H0z" fill="#d5d3cd" />
        <path d="M0 786h45v60L0 848z" fill="#dce6de" />
        <path d="M0 851L45 844" stroke="#c4c8c2" strokeWidth="7" />
        <path d="M0 855L45 848v60L0 930z" fill="#e8eae0" />
        <path d="M0 938L45 912v72L0 1008z" fill="#dfe8da" />
        <path d="M0 932L45 912" stroke="#c8cbc6" strokeWidth="6" />
        <path d="M0 1006L45 984" stroke="#d6d9d2" strokeWidth="9" />
      </svg>
      <div className="flex flex-1 flex-col items-center bg-[#f1f1f1]">
        <button aria-label="Scroll up" className="flex h-[17px] items-center">
          <svg width="8" height="5" viewBox="0 0 8 5" aria-hidden="true">
            <path d="M0 5l4-5 4 5z" fill="#a0a0a0" />
          </svg>
        </button>
        <span className="w-[13px] flex-[421] bg-[#c1c1c1]" />
        <span className="flex-[639]" />
        <button aria-label="Scroll down" className="flex h-[17px] items-center">
          <Caret className="text-[#505050]" />
        </button>
      </div>
    </div>
  </div>
);

type TaskProps = { label: string; active?: boolean; children: ReactNode };

const TaskButton = ({ label, active, children }: TaskProps) => (
  <button
    aria-label={label}
    className={`flex h-[38px] w-[59px] shrink-0 items-center justify-center rounded-xs border border-[#d4ecf9] outline outline-[#1d4f78] ${
      active
        ? 'bg-linear-to-br from-[#e8f4fb] via-[#bfe0f2] to-[#8cc8ea]'
        : 'bg-linear-to-br from-[#a5cce6] via-[#66a9d6] to-[#4fa3d4]'
    }`}
  >
    {children}
  </button>
);

const Taskbar = () => (
  <div className="relative flex h-10 shrink-0 items-center overflow-hidden border-t border-[#1b3550] bg-[linear-gradient(90deg,#1d5c99_0px,#2477b8_60px,#338fcb_140px,#2e86c6_200px,#3f9fd3_500px,#3a98d0_650px,#2580c4_900px,#2273bd_1150px,#1f63ae_1450px,#1a559c_1640px,#143d6c_1740px,#14406f_1920px)]">
    <svg
      viewBox="0 0 70 40"
      className="absolute left-[1385px] top-0 h-10 w-[70px] blur-[2px]"
      fill="none"
      aria-hidden="true"
    >
      <path d="M5 -3c14 11 27 25 38 45" stroke="#a9d0f8" strokeWidth="11" />
    </svg>
    <button aria-label="Start" className="relative ml-2 shrink-0">
      <Svg size={38} box={38}>
        <defs>
          <radialGradient id="orb" cx=".5" cy=".9" r=".9">
            <stop offset="0" stopColor="#4fd0f0" />
            <stop offset=".5" stopColor="#1d659c" />
            <stop offset="1" stopColor="#9fb9ca" />
          </radialGradient>
        </defs>
        <circle cx="19" cy="19" r="18" fill="url(#orb)" stroke="#17405f" />
        <path d="M11 10c3-2 5-2 7 0l-2 8c-2-2-4-2-7-1z" fill="#ee5a28" />
        <path d="M20 11c2 1 5 1 8-1l-2 8c-3 2-5 2-8 0z" fill="#86c440" />
        <path d="M9 19c3-1 5-1 7 1l-2 7c-2-2-4-2-7-1z" fill="#3f9fe0" />
        <path d="M18 20c2 2 5 2 8 0l-2 8c-3 2-6 1-8-1z" fill="#fbc62b" />
      </Svg>
    </button>
    <button aria-label="File Explorer" className="ml-[26px] shrink-0">
      <Svg size={34} box={32}>
        <path d="M2 3h8l1 3h18v20H2z" fill="#e9cf7a" />
        <path d="M3 2h5v3H3z" fill="#37a844" />
        <path d="M12 4h6v3h-6z" fill="#e04f3a" />
        <path d="M21 5h7v3h-7z" fill="#3b8fe0" />
        <path d="M2 9h28v18H2z" fill="#f8e7a4" stroke="#c9a74d" />
        <path d="M5 29v-8c0-2 2-3 4-3h14c3 0 4 1 4 3v8h-5v-6H10v6z" fill="#a5d6f2" stroke="#5ea5cf" />
      </Svg>
    </button>
    <button aria-label="Internet Explorer" className="ml-[29px] shrink-0">
      <Svg size={34} box={32}>
        <path
          d="M27 20c-2 5-5 7-10 7-6 0-11-5-11-11S11 5 17 5s11 5 11 12H12c1 6 8 6 10 3zM12 13h10c-1-5-9-5-10 0z"
          fill="#2a86d4"
          stroke="#0f4c94"
          fillRule="evenodd"
        />
        <path d="M8 25c-8 7-8-1-1-11S27-1 29 3c1 2 0 4-1 6 0-9-12-2-18 7-5 7-6 11-2 9z" fill="#f7c534" />
      </Svg>
    </button>
    <button aria-label="Media Player" className="ml-[29px] shrink-0">
      <Svg size={30} box={30}>
        <path d="M12 3h13v22H12z" fill="#9fcbe8" stroke="#d8edf9" />
        <path d="M3 2h18v25H3z" fill="#b4d6ee" stroke="#e6f4fc" />
        <circle cx="12" cy="15" r="8.500" fill="#f27c1c" stroke="#fff" />
        <path d="M9 10l8 5-8 5z" fill="#fff" />
      </Svg>
    </button>
    <div className="ml-[18px] flex items-center gap-[3px]">
      <TaskButton label="Word">
        <Svg size={32} box={32}>
          <path d="M16 4h14v24H16z" fill="#fff" stroke="#2b579a" />
          <path d="M19 8h9M19 11h9M19 14h9M19 17h9M19 20h9M19 23h9" stroke="#2b579a" />
          <path d="M1 4l18-3v30L1 28z" fill="#2b579a" />
          <text x="3" y="21" fontSize="13" fontWeight="700" fontFamily="Open Sans" fill="#fff">W</text>
        </Svg>
      </TaskButton>
      <TaskButton label="Chrome">
        <Svg size={32} box={32}>
          <circle cx="16" cy="16" r="14" fill="#fbd044" />
          <path d="M16 9h12.200A14 14 0 0 0 4 9l6 10z" fill="#dc4a38" />
          <path d="M4 9a14 14 0 0 0 11 21l7-11H10z" fill="#2b9e54" />
          <circle cx="16" cy="16" r="7" fill="#fff" />
          <circle cx="16" cy="16" r="5.500" fill="#4486f4" />
        </Svg>
      </TaskButton>
      <TaskButton label="Inventor" active>
        <Svg size={32} box={32}>
          <path d="M0 0h32v32H0z" fill="#fbe3cc" />
          <path d="M10 3h12v4h-3v14h3v4H10v-4h3V7h-3z" fill="#d67d22" />
          <path d="M16 7h3v14h-3z" fill="#a35511" />
          <text x="17" y="31" fontSize="6" fontWeight="700" fontFamily="Open Sans" fill="#ef7d10">PRO</text>
        </Svg>
      </TaskButton>
      <div className="flex">
        <TaskButton label="Draftsight">
          <Svg size={32} box={32}>
            <path d="M0 0h32v32H0z" fill="#d8ece4" />
            <path d="M7 4h9c7 0 11 5 11 12s-4 12-11 12H7zM13 9v14h2c4 0 6-3 6-7s-2-7-6-7z" fill="#1d8a4b" fillRule="evenodd" />
            <path d="M22 6c7 6 7 14 0 20l-3-3c4-4 4-10 0-14z" fill="#0f5c33" />
          </Svg>
        </TaskButton>
        <span className="h-[38px] w-[3px] border-r border-[#a5cce6] bg-[#4fa3d4]" />
      </div>
    </div>
    <div className="ml-auto flex items-center text-white">
      <button aria-label="Show hidden icons" className="mr-3">
        <svg width="8" height="4" viewBox="0 0 8 4" aria-hidden="true">
          <path d="M0 4l4-4 4 4z" fill="#fff" />
        </svg>
      </button>
      <button aria-label="Action center" className="mr-2">
        <Svg>
          <path d="M2 1v14" stroke="#fff" strokeWidth="1.500" />
          <path d="M3 2h6v2h6l-2 5H8V8H3z" fill="#fff" />
        </Svg>
      </button>
      <button aria-label="Network" className="mr-4">
        <Svg>
          <path d="M5 4h10v8H4M7 15h7M10 12v3M1 1v4h4V1M3 5v7h2" stroke="#fff" strokeWidth="1.500" />
        </Svg>
      </button>
      <button className="mr-[9px] text-center text-[12px] leading-[17px]">
        13:11
        <br />
        13/02/2018
      </button>
      <button
        aria-label="Show desktop"
        className="h-[39px] w-[14px] border border-[#6c93ba] bg-linear-to-b from-[#2b527f] to-[#174c8a]"
      />
    </div>
  </div>
);

export default function App() {
  return (
    <div className="flex h-screen flex-col bg-white pb-3 pr-1 font-['Open_Sans',sans-serif]">
      <div className="flex min-h-0 flex-1">
        <div className="flex min-w-0 flex-1 flex-col border-b-4 border-[#505050] bg-[#505050]">
          <TitleBar />
          <RibbonTabs />
          <main className="mx-1 flex min-h-0 flex-1 flex-col">
            <Ribbon />
            <div className="flex min-h-0 flex-1">
              <Browser />
              <div className="flex min-w-0 flex-1 flex-col">
                <Viewport />
                <DocTabs />
              </div>
            </div>
            <StatusBar />
          </main>
        </div>
        <BackWindow />
      </div>
      <Taskbar />
    </div>
  );
}
